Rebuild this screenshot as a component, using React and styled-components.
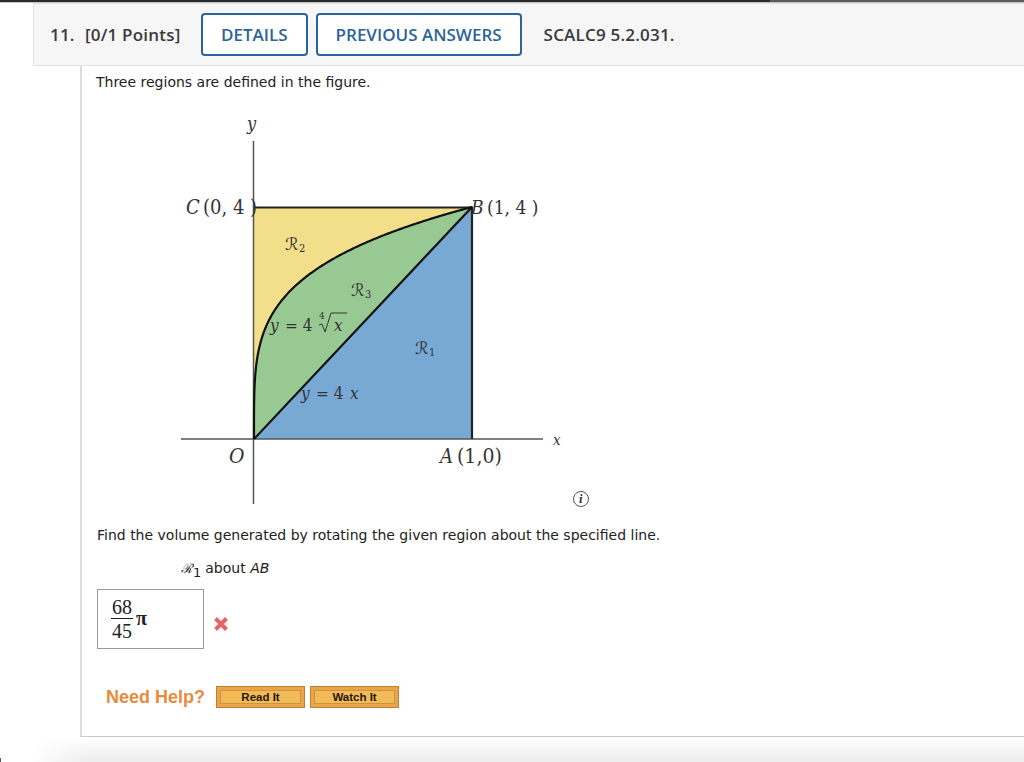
import React from "react";
import styled, { createGlobalStyle } from "styled-components";

const Global = createGlobalStyle`
  html, body { margin: 0; padding: 0; background: #fff; overflow: hidden; }
  body { width: 1024px; height: 762px; font-family: "DejaVu Sans", sans-serif; color: #222; }
`;
const Page = styled.div`
  display: flex; flex-direction: column; width: 1024px; height: 762px; overflow: hidden;
`;
const TopRule = styled.div`
  height: 2px; flex: none; margin-bottom: 1px; box-shadow: 0 1px 0 #c4c4c4;
  background: linear-gradient(90deg, #2a2a2a 0, #2a2a2a 770px, #5c5c5c 770px, #5c5c5c 100%);
`;
const Header = styled.header`
  flex: none; box-sizing: border-box; height: 63px; margin-left: 33px;
  display: flex; align-items: center; padding-left: 16px;
  background: #f6f6f6; border: 1px solid #e2e2e2; border-right: 0;
  font: 600 17px "Open Sans", sans-serif; letter-spacing: 0.2px; color: #3a3a3a;
`;
const Num = styled.span` width: 35px; `;
const Points = styled.span` width: 116px; `;
const OutlineButton = styled.button`
  box-sizing: border-box; height: 43px; padding: 0 18px; margin-right: 8px;
  background: #fff; border: 2px solid #2b6499; border-radius: 4px;
  font: 600 17px "Open Sans", sans-serif; color: #2b6499;
`;
const Code = styled.span` margin-left: 14px; `;
const Panel = styled.main`
  flex: none; box-sizing: border-box; height: 671px; margin-left: 80px;
  border-left: 2px solid #dcdcdc; border-bottom: 1px solid #c8c8c8;
  padding: 6px 0 0 14px; display: flex; flex-direction: column;
`;
const Line = styled.p`
  margin: 0; font-size: 14px; line-height: 20px; color: #222;
`;
const Figure = styled.svg`
  display: block; flex: none; width: 430px; height: 400px; margin: 18px 0 0 74px;
`;
const Question = styled(Line)` margin-top: 15px; padding-left: 1px; `;
const Part = styled.div`
  display: flex; align-items: baseline; margin: 13px 0 0 85px;
  font-size: 14px; line-height: 20px; gap: 4px;
`;
const ScriptR = styled.span`
  font: italic 13px "Liberation Serif", serif;
  sub { font: 13px "DejaVu Sans", sans-serif; vertical-align: -4px; line-height: 0; margin-left: 1px; }
`;
const AnswerRow = styled.div`
  display: flex; align-items: center; gap: 9px; margin: 11px 0 0 1px;
`;
const AnswerBox = styled.div`
  box-sizing: border-box; width: 107px; height: 60px; padding-left: 13px;
  display: flex; align-items: center; gap: 3px;
  border: 1px solid #999; font: 20px/22px "Liberation Serif", serif; color: #222;
`;
const Fraction = styled.div`
  display: flex; flex-direction: column; align-items: center; width: 22px;
`;
const Numer = styled.span` border-bottom: 1px solid #222; width: 100%; text-align: center; `;
const Denom = styled.span` padding-top: 1px; `;
const Pi = styled.span` font-weight: 700; margin-top: -2px; `;
const Cross = styled.svg` width: 16px; height: 16px; margin-top: 10px; `;
const Help = styled.div`
  display: flex; align-items: center; margin: 37px 0 0 10px; gap: 5px;
`;
const HelpLabel = styled.span`
  font: 700 18px "Liberation Sans", sans-serif; color: #e58c3e; margin-right: 6px;
`;
const HelpButton = styled.button`
  box-sizing: border-box; width: 89px; height: 22px; padding: 0;
  background: #f3bb58; border: 1px solid #c07f36; box-shadow: inset 0 0 0 3px #eca44b, inset 0 0 0 4px #c9963f;
  font: 700 11.5px "Liberation Sans", sans-serif; color: #1e1608;
`;
const FootRow = styled.div`
  flex: 1; display: flex; align-items: flex-end;
`;
const CornerMark = styled.span`
  flex: none; width: 1px; height: 4px; background: #555;
`;
const FootShade = styled.div`
  flex: 1; align-self: stretch; margin-left: 29px;
  background: linear-gradient(180deg, #fff 0, #ececec 100%);
  -webkit-mask-image: linear-gradient(90deg, transparent 0, #000 60px);
  mask-image: linear-gradient(90deg, transparent 0, #000 60px);
`;

const curve = () => {
  const pts = [];
  for (let i = 0; i <= 200; i++) {
    const t = Math.pow(i / 200, 3);
    pts.push(`${(254 + 218 * t).toFixed(2)},${(439 - 232 * Math.pow(t, 0.25)).toFixed(2)}`);
  }
  return pts;
};

const Label = styled.text`
  font-family: "DejaVu Serif", serif;
  font-stretch: condensed;
  font-size: ${(p) => p.$size || 17}px;
  font-style: ${(p) => (p.$italic ? "italic" : "normal")};
  fill: #333;
`;
const RegionLetter = styled.text`
  font-family: "DejaVu Sans", sans-serif;
  font-size: 17px;
  fill: #333;
`;

const PlaneFigure = () => {
  const c = curve();
  const green = `M${c.join(" L")} Z`;
  return (
    <Figure viewBox="170 110 430 400">
      <rect x="254" y="207" width="218" height="232" fill="#f3de8a" />
      <polygon points="254,439 472,207 472,439" fill="#78a8d4" />
      <path d={green} fill="#99c992" />
      <path d="M253.500 141V504M181 439H543" stroke="#555" strokeWidth="1.500" fill="none" />
      <path d="M254 207.500H472V439" stroke="#222" strokeWidth="2.200" fill="none" />
      <path d={`M${c.join(" L")}`} stroke="#111" strokeWidth="2.200" fill="none" />
      <path d="M254 439L472 207" stroke="#111" strokeWidth="2.200" fill="none" />
      <Label x="247" y="130" $italic $size={18}>y</Label>
      <Label x="186" y="214" $italic $size={20}>C</Label>
      <Label x="203" y="214" $size={20}>(0, 4 )</Label>
      <Label x="471" y="214" $italic $size={19}>B</Label>
      <Label x="487" y="214" $size={19}>(1, 4 )</Label>
      <RegionLetter x="285" y="250">ℛ</RegionLetter>
      <Label x="299" y="252" $size={11}>2</Label>
      <RegionLetter x="351" y="296">ℛ</RegionLetter>
      <Label x="365" y="298" $size={11}>3</Label>
      <RegionLetter x="415" y="354">ℛ</RegionLetter>
      <Label x="429" y="356" $size={11}>1</Label>
      <Label x="270" y="331" $italic>y</Label>
      <Label x="285" y="331">= 4</Label>
      <Label x="319" y="319" $size={10}>4</Label>
      <path d="M319 325l3-1 3 8 6-19h16" stroke="#333" strokeWidth="1" fill="none" />
      <Label x="334" y="331" $italic>x</Label>
      <Label x="301" y="399" $italic>y</Label>
      <Label x="316" y="399">= 4</Label>
      <Label x="350" y="399" $italic>x</Label>
      <Label x="229" y="463" $italic $size={21}>O</Label>
      <Label x="440" y="463" $italic $size={20}>A</Label>
      <Label x="457" y="463" $size={21}>(1,0)</Label>
      <Label x="553" y="445" $italic $size={15}>x</Label>
      <circle cx="581" cy="499" r="7.500" fill="none" stroke="#555" strokeWidth="1" />
      <Label x="579" y="503" $italic $size={11} style={{ fontWeight: 700 }}>i</Label>
    </Figure>
  );
};

export default function App() {
  return (
    <Page>
      <Global />
      <TopRule />
      <Header>
        <Num>11.</Num>
        <Points>[0/1 Points]</Points>
        <OutlineButton>DETAILS</OutlineButton>
        <OutlineButton>PREVIOUS ANSWERS</OutlineButton>
        <Code>SCALC9 5.2.031.</Code>
      </Header>
      <Panel>
        <Line>Three regions are defined in the figure.</Line>
        <PlaneFigure />
        <Question>Find the volume generated by rotating the given region about the specified line.</Question>
        <Part>
          <ScriptR>ℛ<sub>1</sub></ScriptR>
          <span>about <i>AB</i></span>
        </Part>
        <AnswerRow>
          <AnswerBox>
            <Fraction>
              <Numer>68</Numer>
              <Denom>45</Denom>
            </Fraction>
            <Pi>π</Pi>
          </AnswerBox>
          <Cross viewBox="0 0 16 16">
            <path d="M2.500 2.500L13.500 13.500M13.500 2.500L2.500 13.500" stroke="#e4646c" strokeWidth="4" />
          </Cross>
        </AnswerRow>
        <Help>
          <HelpLabel>Need Help?</HelpLabel>
          <HelpButton>Read It</HelpButton>
          <HelpButton>Watch It</HelpButton>
        </Help>
      </Panel>
      <FootRow>
        <CornerMark />
        <FootShade />
      </FootRow>
    </Page>
  );
}
